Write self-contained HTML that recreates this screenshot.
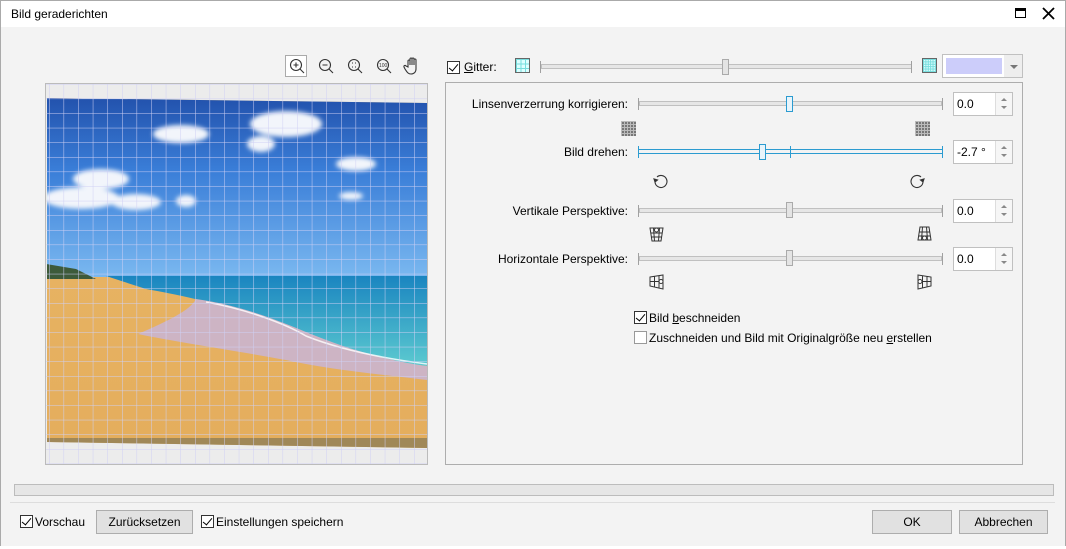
<!DOCTYPE html>
<html><head><meta charset="utf-8"><style>
*{box-sizing:border-box;margin:0;padding:0}
body{width:1066px;height:549px;background:#f3f3f3;font-family:"Liberation Sans",sans-serif;font-size:12px;color:#000;position:relative;overflow:hidden}
.a{position:absolute}
.title{left:0;top:0;width:1066px;height:27px;background:#fff;border:1px solid #aaa;border-bottom:none}
.cb{position:absolute;width:13px;height:13px;border:1px solid #333;background:#fff}
.cb.on::after{content:"";position:absolute;left:3px;top:0px;width:4px;height:8px;border:solid #000;border-width:0 1.6px 1.6px 0;transform:rotate(40deg)}
.cb.off{border-color:#999}
.lbl{position:absolute;white-space:nowrap}
.track{position:absolute;height:5px;border:1px solid #c0c0c0;background:#e6e6e6}
.end{position:absolute;width:1px;height:12px;background:#a0a0a0}
.thumb{position:absolute;width:7px;height:16px;border:1px solid #aaa;background:#e4e4e4}
.spin{position:absolute;width:60px;height:24px;border:1px solid #c0c0c0;background:#fff}
.spin span{position:absolute;left:3px;top:4px}
.spin i{position:absolute;right:0;top:0;width:17px;height:22px;border-left:1px solid #ddd;background:#f6f6f6}
.spin i::before{content:"";position:absolute;left:5px;top:5px;border:3px solid transparent;border-bottom:3px solid #888;border-top:none}
.spin i::after{content:"";position:absolute;left:5px;top:13px;border:3px solid transparent;border-top:3px solid #888;border-bottom:none}
.btn{position:absolute;height:24px;border:1px solid #adadad;background:#e1e1e1;text-align:center;line-height:22px}
</style></head><body>
<div class="a title"></div>
<div class="lbl" style="left:11px;top:7px">Bild geraderichten</div>
<div class="a" style="left:1015px;top:8px;width:11px;height:10px;border:1px solid #000;border-top:3px solid #000"></div>
<svg class="a" style="left:1042px;top:7px" width="13" height="13"><path d="M1 1L12 12M12 1L1 12" stroke="#000" stroke-width="1.8"/></svg>
<div class="a" style="left:0;top:27px;width:1px;height:522px;background:#aaa"></div>
<div class="a" style="left:1065px;top:27px;width:1px;height:522px;background:#aaa"></div>

<div class="a" style="left:285px;top:55px;width:22px;height:22px;border:1px solid #aaa;background:#fff"></div>
<svg class="a" style="left:286px;top:56px" width="140" height="22" fill="none" stroke="#333" stroke-width="1.1">
<circle cx="10" cy="9" r="5.5"/><path d="M14 13l4 4M7.5 9h5M10 6.5v5"/>
<g transform="translate(29,0)"><circle cx="10" cy="9" r="5.5"/><path d="M14 13l4 4M7.5 9h5"/></g>
<g transform="translate(58,0)"><circle cx="10" cy="9" r="5.5"/><path d="M14 13l4 4M8 7h1M11 7h1M8 11h1M11 11h1"/></g>
<g transform="translate(87,0)"><circle cx="10" cy="9" r="5.5"/><path d="M14 13l4 4"/><text x="6" y="11" font-size="5" fill="#333" stroke="none" font-family="Liberation Sans">100</text></g>
<g transform="translate(116,0)"><path d="M6 11V5a1 1 0 012 0v4V3a1 1 0 012 0v6V3a1 1 0 012 0v6V4a1 1 0 012 0v9c0 3-2 5-5 5s-4-2-6-5l-1-2a1 1 0 012-1z"/></g>
</svg>

<div class="a" style="left:45px;top:83px;width:383px;height:382px;border:1px solid #bbb;background:#ececec"></div>
<svg class="a" style="left:46px;top:84px" width="381" height="380">
<defs>
<linearGradient id="sky" x1="0" y1="0" x2="0" y2="1"><stop offset="0" stop-color="#1e4aa5"/><stop offset="0.45" stop-color="#3a7ed8"/><stop offset="1" stop-color="#7ab8f0"/></linearGradient>
<linearGradient id="sea" x1="0" y1="0" x2="0" y2="1"><stop offset="0" stop-color="#1a85c0"/><stop offset="1" stop-color="#5ccad0"/></linearGradient>
<linearGradient id="sand" x1="0" y1="0" x2="0" y2="1"><stop offset="0" stop-color="#eab868"/><stop offset="1" stop-color="#e4ad5c"/></linearGradient>
<clipPath id="c"><path d="M1 14L381 19L381 364L1 358Z"/></clipPath>
<filter id="bl"><feGaussianBlur stdDeviation="2.5"/></filter>
</defs>
<g clip-path="url(#c)">
<rect x="0" y="0" width="381" height="380" fill="url(#sand)"/>
<rect x="0" y="0" width="381" height="193" fill="url(#sky)"/>
<path d="M60 192H381V282C340 278 300 268 260 250 200 225 140 212 100 205Z" fill="url(#sea)"/>
<path d="M150 215C200 222 240 240 270 252 310 268 350 278 381 282V296C330 290 280 285 240 276 180 265 130 258 92 250 120 238 145 226 150 215Z" fill="#cdb4c4"/>
<path d="M160 218C200 225 240 240 260 252 300 268 350 276 381 280" stroke="#fff" stroke-width="1.5" fill="none" opacity="0.8"/>
<path d="M0 180L30 185L50 195H0Z" fill="#3d5a3a"/>
<rect x="0" y="354" width="381" height="10" fill="#a08858"/>
<g fill="#f2f5fb" filter="url(#bl)">
<ellipse cx="135" cy="50" rx="28" ry="9"/><ellipse cx="240" cy="40" rx="36" ry="13"/><ellipse cx="215" cy="60" rx="14" ry="8"/>
<ellipse cx="55" cy="95" rx="28" ry="10"/><ellipse cx="35" cy="114" rx="38" ry="11"/><ellipse cx="90" cy="118" rx="25" ry="8"/>
<ellipse cx="310" cy="80" rx="20" ry="7"/><ellipse cx="140" cy="117" rx="10" ry="6"/><ellipse cx="305" cy="112" rx="12" ry="4"/>
</g>
</g>
<defs><pattern id="g" width="14.6" height="14.6" patternUnits="userSpaceOnUse" x="3" y="0"><path d="M0 0H14.6M0 0V14.6" stroke="#cfd0f4" stroke-width="1" fill="none"/></pattern></defs>
<rect width="381" height="380" fill="url(#g)"/>
</svg>

<div class="cb on" style="left:447px;top:61px"></div>
<div class="lbl" style="left:464px;top:60px"><u>G</u>itter:</div>
<div class="a" style="left:515px;top:58px;width:15px;height:15px;border:1px solid #666;background:#dff;background-image:linear-gradient(#7dd 1px,transparent 1px),linear-gradient(90deg,#7dd 1px,transparent 1px);background-size:4.5px 4.5px"></div>
<div class="end" style="left:540px;top:61px"></div>
<div class="track" style="left:541px;top:64px;width:371px"></div>
<div class="end" style="left:911px;top:61px"></div>
<div class="thumb" style="left:722px;top:59px"></div>
<div class="a" style="left:922px;top:58px;width:15px;height:15px;border:1px solid #666;background:#dff;background-image:linear-gradient(#7dd 1px,transparent 1px),linear-gradient(90deg,#7dd 1px,transparent 1px);background-size:2.4px 2.4px"></div>
<div class="a" style="left:942px;top:54px;width:81px;height:24px;border:1px solid #c0c0c0;background:#fff"></div>
<div class="a" style="left:946px;top:58px;width:56px;height:16px;background:#cccdfa"></div>
<div class="a" style="left:1004px;top:55px;width:18px;height:22px;background:#eee"></div>
<div class="a" style="left:1010px;top:65px;border:4px solid transparent;border-top:4px solid #777;border-bottom:none"></div>

<div class="a" style="left:445px;top:82px;width:578px;height:383px;border:1px solid #adadad;background:#f3f3f3"></div>

<div class="lbl" style="right:438px;top:97px">Linsenverzerrung korrigieren:</div>
<div class="end" style="left:638px;top:98px"></div><div class="track" style="left:639px;top:101px;width:303px"></div><div class="end" style="left:942px;top:98px"></div>
<div class="thumb" style="left:786px;top:96px;border-color:#2b9bd0;background:#e8f4fb"></div>
<div class="spin" style="left:953px;top:92px"><span>0.0</span><i></i></div>
<div class="a" style="left:621px;top:121px;width:15px;height:15px;background:#777;background-image:linear-gradient(#bbb 1px,transparent 1px),linear-gradient(90deg,#bbb 1px,transparent 1px);background-size:3px 3px"></div>
<div class="a" style="left:915px;top:121px;width:15px;height:15px;background:#777;background-image:linear-gradient(#bbb 1px,transparent 1px),linear-gradient(90deg,#bbb 1px,transparent 1px);background-size:3px 3px"></div>

<div class="lbl" style="right:438px;top:145px">Bild drehen:</div>
<div class="a" style="left:638px;top:146px;width:1px;height:12px;background:#2b9bd0"></div>
<div class="a" style="left:639px;top:149px;width:303px;height:5px;border:1px solid #2b9bd0;border-left:none;border-right:none"></div>
<div class="a" style="left:942px;top:146px;width:1px;height:12px;background:#2b9bd0"></div>
<div class="a" style="left:790px;top:146px;width:1px;height:12px;background:#2b9bd0"></div>
<div class="thumb" style="left:759px;top:144px;border-color:#2b9bd0;background:#e8f4fb"></div>
<div class="spin" style="left:953px;top:140px"><span>-2.7 °</span><i></i></div>
<svg class="a" style="left:652px;top:173px" width="16" height="16" fill="none" stroke="#333" stroke-width="1.1"><path d="M5 4A6 6 0 1 1 3 9"/><path d="M2 6l1 3 2.5-2z" fill="#333"/></svg>
<svg class="a" style="left:910px;top:173px" width="16" height="16" fill="none" stroke="#333" stroke-width="1.1"><path d="M11 4A6 6 0 1 0 13 9"/><path d="M14 6l-1 3-2.5-2z" fill="#333"/></svg>

<div class="lbl" style="right:438px;top:204px">Vertikale Perspektive:</div>
<div class="end" style="left:638px;top:205px"></div><div class="track" style="left:639px;top:208px;width:303px"></div><div class="end" style="left:942px;top:205px"></div>
<div class="thumb" style="left:786px;top:202px"></div>
<div class="spin" style="left:953px;top:199px"><span>0.0</span><i></i></div>
<svg class="a" style="left:648px;top:225px" width="18" height="18" fill="none" stroke="#333" stroke-width="1"><path d="M2 3H15L13 16H4Z M5.5 3L6.5 16M11.5 3L10.5 16M2.5 8H14.5M3.5 12H13.5"/><circle cx="8.5" cy="5" r="2" fill="#fff"/></svg>
<svg class="a" style="left:916px;top:225px" width="18" height="18" fill="none" stroke="#333" stroke-width="1"><path d="M4 2H13L15 15H2Z M6.5 2L5.5 15M10.5 2L11.5 15M3 7H14M2.5 11H14.5"/><circle cx="8.5" cy="13" r="2" fill="#fff"/></svg>

<div class="lbl" style="right:438px;top:252px">Horizontale Perspektive:</div>
<div class="end" style="left:638px;top:253px"></div><div class="track" style="left:639px;top:256px;width:303px"></div><div class="end" style="left:942px;top:253px"></div>
<div class="thumb" style="left:786px;top:250px"></div>
<div class="spin" style="left:953px;top:247px"><span>0.0</span><i></i></div>
<svg class="a" style="left:648px;top:273px" width="18" height="18" fill="none" stroke="#333" stroke-width="1"><path d="M2 4L15 2V16L2 13Z M2 8.5H15M6.5 3.3V14M11 2.6V15"/><circle cx="13" cy="8.5" r="2" fill="#fff"/></svg>
<svg class="a" style="left:916px;top:273px" width="18" height="18" fill="none" stroke="#333" stroke-width="1"><path d="M2 2L15 4V13L2 16Z M2 8.5H15M6.5 2.6V15M11 3.3V14"/><circle cx="4" cy="8.5" r="2" fill="#fff"/></svg>

<div class="cb on" style="left:634px;top:311px"></div>
<div class="lbl" style="left:649px;top:311px">Bild <u>b</u>eschneiden</div>
<div class="cb off" style="left:634px;top:331px"></div>
<div class="lbl" style="left:649px;top:331px">Zuschneiden und Bild mit Originalgröße neu <u>e</u>rstellen</div>

<div class="a" style="left:14px;top:484px;width:1040px;height:12px;border:1px solid #bcbcbc;background:#e6e6e6"></div>
<div class="a" style="left:10px;top:502px;width:1045px;height:1px;background:#ddd"></div>
<div class="cb on" style="left:20px;top:515px"></div>
<div class="lbl" style="left:35px;top:515px">Vorschau</div>
<div class="btn" style="left:96px;top:510px;width:97px">Zurücksetzen</div>
<div class="cb on" style="left:201px;top:515px"></div>
<div class="lbl" style="left:216px;top:515px">Einstellungen speichern</div>
<div class="btn" style="left:872px;top:510px;width:80px">OK</div>
<div class="btn" style="left:959px;top:510px;width:89px">Abbrechen</div>
<div class="a" style="left:0;top:546px;width:1066px;height:3px;background:#fff"></div>
</body></html>
